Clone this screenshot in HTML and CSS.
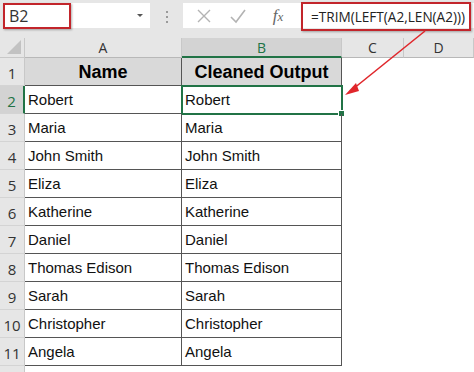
FILE: index.html
```html
<!DOCTYPE html>
<html>
  <head>
    <title>TRIM formula</title>
    <link rel="stylesheet" href="styles.css">
  </head>
  <body>
    <div class="screen">
      <div class="toolbar">
        <div class="name-box">
          <span class="name-value">B2</span>
          <span class="name-arrow"></span>
        </div>
        <div class="grip">
          <span></span><span></span><span></span>
        </div>
        <div class="formula-area">
          <span class="fx-btn">
            <svg width="16" height="16" viewBox="0 0 16 16"><path d="M2 2 L14 14 M14 2 L2 14" stroke="#b3b3b3" stroke-width="1.4" fill="none"/></svg>
          </span>
          <span class="fx-btn">
            <svg width="18" height="16" viewBox="0 0 18 16"><path d="M2 9 L7 14 L16 2" stroke="#b3b3b3" stroke-width="1.6" fill="none"/></svg>
          </span>
          <span class="fx-label"><i>f</i><i class="fx-x">x</i></span>
          <div class="formula">=TRIM(LEFT(A2,LEN(A2)))</div>
        </div>
      </div>

      <div class="sheet">
        <div class="corner"><span class="corner-tri"></span></div>
        <div class="col-head">A</div>
        <div class="col-head active">B</div>
        <div class="col-head">C</div>
        <div class="col-head">D</div>

        <div class="row-head">1</div>
        <div class="cell head">Name</div>
        <div class="cell head">Cleaned Output</div>
        <div class="blank"></div>
        <div class="blank"></div>

        <div class="row-head active">2</div>
        <div class="cell">Robert</div>
        <div class="cell selected">Robert<span class="handle"></span></div>
        <div class="blank"></div>
        <div class="blank"></div>

        <div class="row-head">3</div>
        <div class="cell">Maria</div>
        <div class="cell">Maria</div>
        <div class="blank"></div>
        <div class="blank"></div>

        <div class="row-head">4</div>
        <div class="cell">John Smith</div>
        <div class="cell">John Smith</div>
        <div class="blank"></div>
        <div class="blank"></div>

        <div class="row-head">5</div>
        <div class="cell">Eliza</div>
        <div class="cell">Eliza</div>
        <div class="blank"></div>
        <div class="blank"></div>

        <div class="row-head">6</div>
        <div class="cell">Katherine</div>
        <div class="cell">Katherine</div>
        <div class="blank"></div>
        <div class="blank"></div>

        <div class="row-head">7</div>
        <div class="cell">Daniel</div>
        <div class="cell">Daniel</div>
        <div class="blank"></div>
        <div class="blank"></div>

        <div class="row-head">8</div>
        <div class="cell">Thomas Edison</div>
        <div class="cell">Thomas Edison</div>
        <div class="blank"></div>
        <div class="blank"></div>

        <div class="row-head">9</div>
        <div class="cell">Sarah</div>
        <div class="cell">Sarah</div>
        <div class="blank"></div>
        <div class="blank"></div>

        <div class="row-head">10</div>
        <div class="cell">Christopher</div>
        <div class="cell">Christopher</div>
        <div class="blank"></div>
        <div class="blank"></div>

        <div class="row-head">11</div>
        <div class="cell">Angela</div>
        <div class="cell">Angela</div>
        <div class="blank"></div>
        <div class="blank"></div>

        <div class="row-head"></div>
        <div class="blank"></div>
        <div class="blank"></div>
        <div class="blank"></div>
        <div class="blank"></div>
      </div>

      <!-- red call-out from the formula to the selected cell -->
      <svg class="pointer" width="474" height="372" viewBox="0 0 474 372">
        <line x1="425" y1="31" x2="353" y2="89" stroke="#e0262b" stroke-width="1.6"/>
        <path d="M345 95 L356 83 L359 91 Z" fill="#e0262b"/>
      </svg>
    </div>
  </body>
</html>
```

FILE: styles.css
```css
body {
  margin: 0;
  font-family: "Liberation Sans", Arial, sans-serif;
  background: #fff;
}
.screen {
  position: relative;
  width: 474px;
  height: 372px;
  overflow: hidden;
}
.toolbar {
  display: flex;
  align-items: flex-start;
  height: 38px;
  box-sizing: border-box;
  padding: 3px 0 0 3px;
  background: #e6e6e6;
}
.name-box {
  position: relative;
  display: flex;
  flex-shrink: 0;
  align-items: center;
  justify-content: space-between;
  width: 147px;
  height: 25px;
  box-sizing: border-box;
  background: #fff;
  padding: 0 7px 0 6px;
  font-family: "Open Sans", sans-serif;
  font-size: 16px;
  color: #333;
}
.name-box::after {
  content: "";
  position: absolute;
  left: 0;
  top: 0;
  width: 68px;
  height: 26px;
  border: 2px solid #c2252b;
  box-sizing: border-box;
  box-shadow: 1px 1px 2px rgba(0, 0, 0, 0.3);
}
.name-arrow {
  width: 0;
  height: 0;
  border-left: 3px solid transparent;
  border-right: 3px solid transparent;
  border-top: 3px solid #555;
}
.grip {
  display: flex;
  flex-shrink: 0;
  flex-direction: column;
  gap: 3px;
  width: 33px;
  align-items: center;
  padding-top: 8px;
}
.grip span {
  width: 2px;
  height: 2px;
  background: #9a9a9a;
}
.formula-area {
  position: relative;
  display: flex;
  align-items: center;
  flex: 1;
  min-width: 0;
  height: 25px;
  background: #fff;
}
.fx-btn {
  display: flex;
  flex-shrink: 0;
  width: 34px;
  justify-content: center;
}
.fx-btn:first-child {
  margin-left: 4px;
}
.fx-label {
  flex-shrink: 0;
  width: 46px;
  text-align: center;
  font-family: "Liberation Serif", serif;
  font-size: 17px;
  color: #666;
}
.fx-x {
  font-size: 13px;
}
.formula {
  flex: 1;
  min-width: 0;
  height: 29px;
  margin: 1px 3px 0 0;
  padding: 0 0 0 8px;
  border: 2px solid #c2252b;
  box-sizing: border-box;
  box-shadow: 1px 1px 2px rgba(0, 0, 0, 0.3);
  display: flex;
  align-items: center;
  font-family: "Open Sans", sans-serif;
  font-size: 13.6px;
  color: #222;
  white-space: nowrap;
  overflow: hidden;
}
.sheet {
  display: grid;
  grid-template-columns: 25px 157px 160px 62px 70px;
  grid-template-rows: 20px repeat(12, 28px);
}
.corner {
  position: relative;
  background: #e6e6e6;
  border-right: 1px solid #c8c8c8;
  border-bottom: 1px solid #c8c8c8;
}
.corner-tri {
  position: absolute;
  right: 3px;
  bottom: 3px;
  width: 0;
  height: 0;
  border-left: 14px solid transparent;
  border-bottom: 14px solid #c2c2c2;
}
.col-head {
  background: #e6e6e6;
  border-right: 1px solid #c8c8c8;
  border-bottom: 1px solid #b8b8b8;
  text-align: center;
  font-family: "Open Sans", sans-serif;
  font-size: 14px;
  line-height: 20px;
  color: #333;
}
.col-head.active {
  background: #d3d3d3;
  color: #217346;
  border-bottom: 2px solid #217346;
  line-height: 19px;
}
.row-head {
  background: #e6e6e6;
  border-right: 1px solid #c8c8c8;
  border-bottom: 1px solid #d4d4d4;
  text-align: center;
  font-family: "Open Sans", sans-serif;
  font-size: 15px;
  line-height: 31px;
  color: #333;
}
.row-head.active {
  background: #d3d3d3;
  color: #217346;
  border-right: 2px solid #217346;
}
.cell {
  position: relative;
  border-right: 1px solid #555;
  border-bottom: 1px solid #555;
  padding-left: 3px;
  font-size: 15px;
  line-height: 28px;
  color: #111;
  white-space: nowrap;
}
.cell.head {
  background: #d9d9d9;
  text-align: center;
  padding-left: 0;
  font-weight: bold;
  font-size: 18px;
  color: #000;
}
.cell.selected {
  outline: 2px solid #217346;
  outline-offset: -1px;
}
.handle {
  position: absolute;
  right: -4px;
  bottom: -4px;
  width: 5px;
  height: 5px;
  background: #217346;
  border: 1px solid #fff;
}
.pointer {
  position: absolute;
  left: 0;
  top: 0;
  pointer-events: none;
}
```
